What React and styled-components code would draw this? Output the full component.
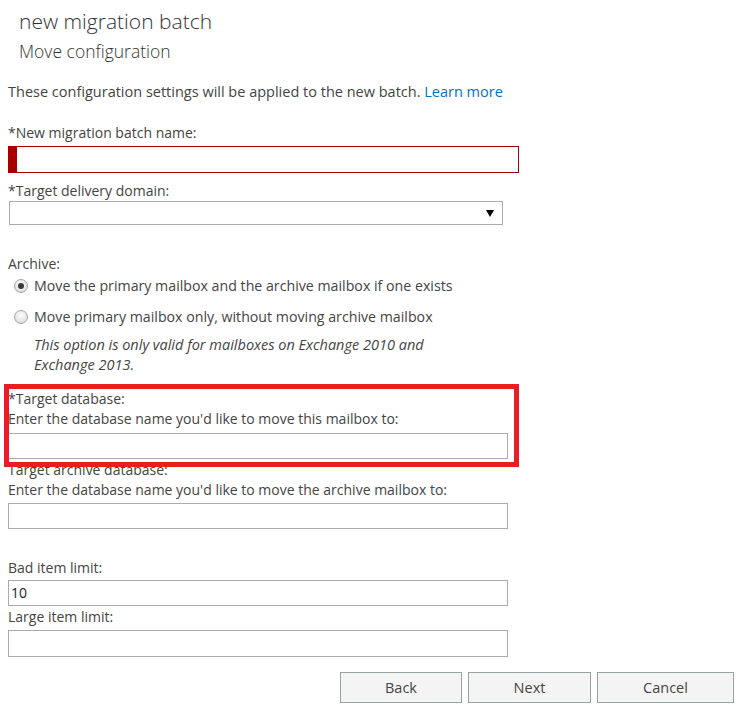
import React from "react";
import styled, { createGlobalStyle } from "styled-components";

const Global = createGlobalStyle`
  html, body { margin: 0; padding: 0; background: #fff; }
  body { font-family: "Segoe UI", "Open Sans", "Noto Sans", sans-serif; color: #444; }
`;

const Page = styled.div`
  width: 743px;
  height: 712px;
  padding: 6px 0 0 8px;
  box-sizing: border-box;
  display: flex;
  flex-direction: column;
`;

const Title = styled.h1`
  margin: 0 0 0 11px;
  font-size: 21px;
  font-weight: 300;
  line-height: 30px;
  height: 30px;
  color: #333;
`;

const Subtitle = styled.h2`
  margin: 3px 0 0 11px;
  font-size: 17.5px;
  font-weight: 300;
  line-height: 24px;
  height: 24px;
  color: #333;
`;

const Description = styled.p`
  margin: 19px 0 0 0;
  font-size: 14.5px;
  line-height: 20px;
  color: #444;
`;

const Link = styled.a`
  color: #0072c6;
  text-decoration: none;
`;

const Label = styled.div`
  font-size: 14px;
  line-height: 20px;
  color: #444;
  white-space: nowrap;
  margin-top: ${(p) => p.$mt || 0}px;
`;

const TextBox = styled.div`
  box-sizing: border-box;
  width: ${(p) => p.$w || 500}px;
  height: ${(p) => p.$h || 26}px;
  margin-top: ${(p) => p.$mt || 3}px;
  border: 1px solid #ababab;
  background: #fff;
  font-size: 14px;
  line-height: 24px;
  padding-left: 2px;
  color: #222;
`;

const RequiredBox = styled.div`
  box-sizing: border-box;
  width: 511px;
  height: 27px;
  margin-top: 3px;
  border: 1px solid #a80000;
  border-left: 9px solid #a80000;
  background: #fff;
`;

const Select = styled.div`
  box-sizing: border-box;
  width: 494px;
  height: 24px;
  margin-left: 1px;
  border: 1px solid #ababab;
  background: #fff;
  display: flex;
  align-items: center;
  justify-content: flex-end;
  padding-right: 8px;
`;

const Arrow = styled.span`
  width: 0;
  height: 0;
  border-left: 4px solid transparent;
  border-right: 4px solid transparent;
  border-top: 7px solid #000;
`;

const RadioList = styled.div`
  display: flex;
  flex-direction: column;
  gap: 11px;
  margin-top: 2px;
  padding-left: 6px;
`;

const RadioRow = styled.label`
  display: flex;
  align-items: center;
  gap: 6px;
  font-size: 14.2px;
  line-height: 20px;
  color: #444;
  white-space: nowrap;
`;

const RadioCircle = styled.span`
  box-sizing: border-box;
  width: 14px;
  height: 14px;
  border-radius: 50%;
  border: 1px solid #a5a5a5;
  background: radial-gradient(circle at 50% 35%, #fdfdfd 0%, #e8e8e8 55%, #d2d2d2 100%);
  display: flex;
  align-items: center;
  justify-content: center;
  flex: none;
  &::after {
    content: "";
    width: 6px;
    height: 6px;
    border-radius: 50%;
    background: ${(p) => (p.$checked ? "#3a3a3a" : "transparent")};
  }
`;

const Note = styled.div`
  margin: 8px 0 0 26px;
  font-size: 14.5px;
  font-style: italic;
  line-height: 20px;
  color: #444;
  width: 415px;
`;

const Group = styled.div`
  position: relative;
  margin-top: ${(p) => p.$mt || 0}px;
`;

const Highlight = styled.div`
  position: absolute;
  left: -4px;
  top: -5px;
  width: 515px;
  height: 83px;
  box-sizing: border-box;
  border: 5px solid #ed1c24;
  pointer-events: none;
  z-index: 2;
`;

const Buttons = styled.div`
  display: flex;
  justify-content: flex-end;
  gap: 6px;
  margin-top: 15px;
  padding-right: 9px;
`;

const Button = styled.button`
  box-sizing: border-box;
  width: ${(p) => p.$w}px;
  height: 31px;
  border: 1px solid #98a3a3;
  background: #f4f4f4;
  font-family: inherit;
  font-size: 14.5px;
  color: #444;
  padding: 0;
`;

export default function App() {
  return (
    <>
      <Global />
      <Page>
        <Title>new migration batch</Title>
        <Subtitle>Move configuration</Subtitle>
        <Description>
          These configuration settings will be applied to the new batch. <Link href="#">Learn more</Link>
        </Description>

        <Label $mt={21}>*New migration batch name:</Label>
        <RequiredBox />

        <Label $mt={8}>*Target delivery domain:</Label>
        <Select>
          <Arrow />
        </Select>

        <Label $mt={29}>Archive:</Label>
        <RadioList>
          <RadioRow>
            <RadioCircle $checked />
            Move the primary mailbox and the archive mailbox if one exists
          </RadioRow>
          <RadioRow>
            <RadioCircle />
            Move primary mailbox only, without moving archive mailbox
          </RadioRow>
        </RadioList>
        <Note>This option is only valid for mailboxes on Exchange 2010 and Exchange 2013.</Note>

        <Group $mt={14}>
          <Highlight />
          <Label>*Target database:</Label>
          <Label>Enter the database name you'd like to move this mailbox to:</Label>
          <TextBox $mt={4} />
        </Group>

        <Group $mt={1}>
          <Label>Target archive database:</Label>
          <Label>Enter the database name you'd like to move the archive mailbox to:</Label>
          <TextBox $mt={3} />
        </Group>

        <Label $mt={29}>Bad item limit:</Label>
        <TextBox $mt={2}>10</TextBox>
        <Label $mt={1}>Large item limit:</Label>
        <TextBox $mt={3} $h={27} />

        <Buttons>
          <Button $w={122}>Back</Button>
          <Button $w={123}>Next</Button>
          <Button $w={137}>Cancel</Button>
        </Buttons>
      </Page>
    </>
  );
}
